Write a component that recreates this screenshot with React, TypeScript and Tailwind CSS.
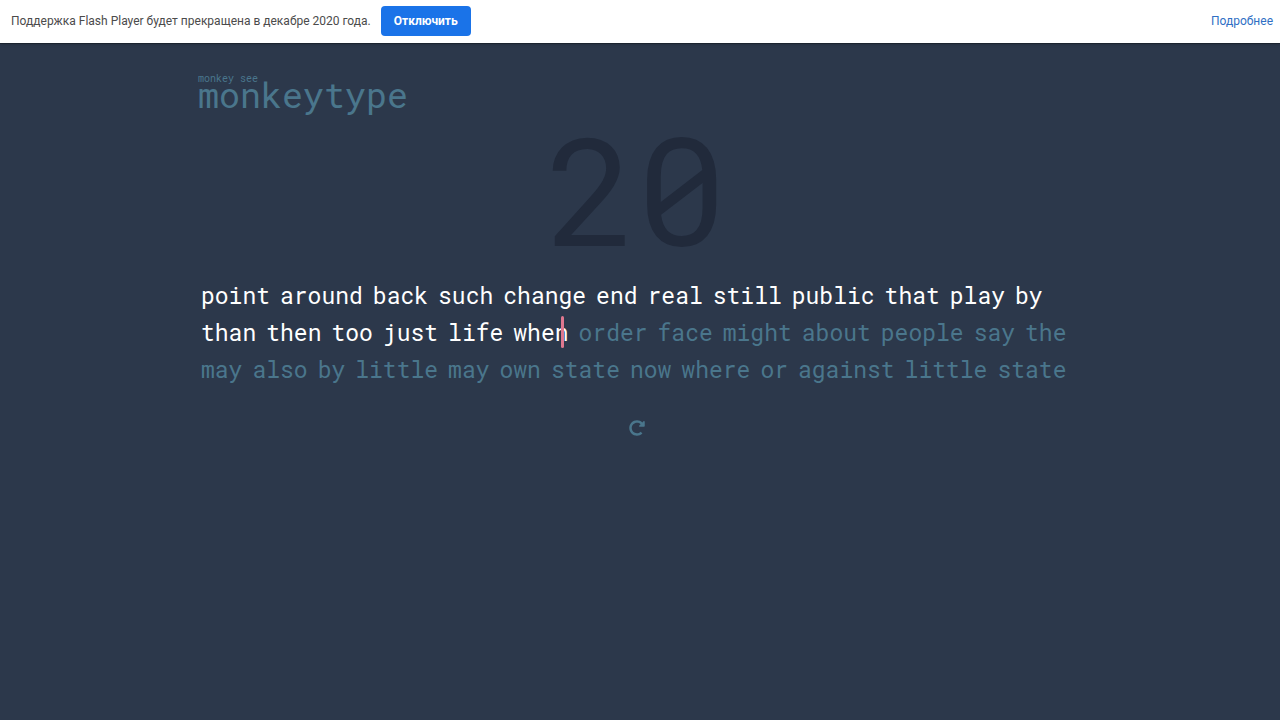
import { FaRedoAlt } from 'react-icons/fa';

type WordState = 'typed' | 'active' | 'pending';

interface WordProps {
  text: string;
  state: WordState;
}

const lines = [
  'point around back such change end real still public that play by',
  'than then too just life when order face might about people say the',
  'may also by little may own state now where or against little state',
].map((line) => line.split(' '));

const ACTIVE_INDEX = 17;

function FlashNotice() {
  return (
    <div
      role="alert"
      className="flex items-center gap-2.5 border-b border-[#1b2430] bg-white pb-[7px] pt-1.5 pl-[11px] pr-[7px] font-['Roboto',sans-serif] text-xs shadow-sm"
    >
      <p className="text-[#4b4b4b]">
        Поддержка Flash Player будет прекращена в декабре 2020 года.
      </p>
      <button
        type="button"
        className="h-[30px] rounded bg-[#1a73e8] px-[13px] font-bold text-white hover:bg-[#1765cc]"
      >
        Отключить
      </button>
      <a href="#details" className="ml-auto text-[#2f6fc4] hover:underline">
        Подробнее
      </a>
    </div>
  );
}

function Word({ text, state }: WordProps) {
  if (state !== 'active') {
    return (
      <span className={state === 'typed' ? 'text-white' : 'text-[#4a768c]'}>
        {text}
      </span>
    );
  }

  // The caret sits over the last letter of the active word
  return (
    <span className="text-white">
      {text.slice(0, -1)}
      <span className="relative">
        {text.slice(-1)}
        <span className="absolute inset-y-[-1px] left-1.5 w-[3px] rounded-sm bg-[#e0788f]" />
      </span>
    </span>
  );
}

export default function App() {
  let index = -1;

  return (
    <div className="flex min-h-screen flex-col bg-[#2c384b] font-['Roboto_Mono','DejaVu_Sans_Mono',monospace] text-[#4a768c]">
      <FlashNotice />

      <div className="w-full pr-[7px] pt-[30px]">
        <div className="mx-auto w-full max-w-[883px]">
          <header className="pl-[3px]">
            <p className="text-[10px] leading-[10px]">monkey see</p>
            <h1 className="text-[35px] leading-5">monkeytype</h1>
          </header>

          <main className="mt-4">
            <div
              role="timer"
              className="text-center text-[150px] leading-[136px] text-[#212a3b]"
            >
              20
            </div>

            <div className="mt-[21px] px-1.5 text-[23px] leading-[37px]">
              {lines.map((words, row) => (
                <div key={row} className="flex flex-wrap gap-x-2.5">
                  {words.map((word, col) => {
                    index += 1;
                    const state: WordState =
                      index < ACTIVE_INDEX ? 'typed' : index === ACTIVE_INDEX ? 'active' : 'pending';
                    return <Word key={col} text={word} state={state} />;
                  })}
                </div>
              ))}
            </div>

            <div className="mt-7 flex justify-center">
              <button type="button" aria-label="Restart test" className="p-1 hover:text-white">
                <FaRedoAlt className="size-4" />
              </button>
            </div>
          </main>
        </div>
      </div>
    </div>
  );
}
